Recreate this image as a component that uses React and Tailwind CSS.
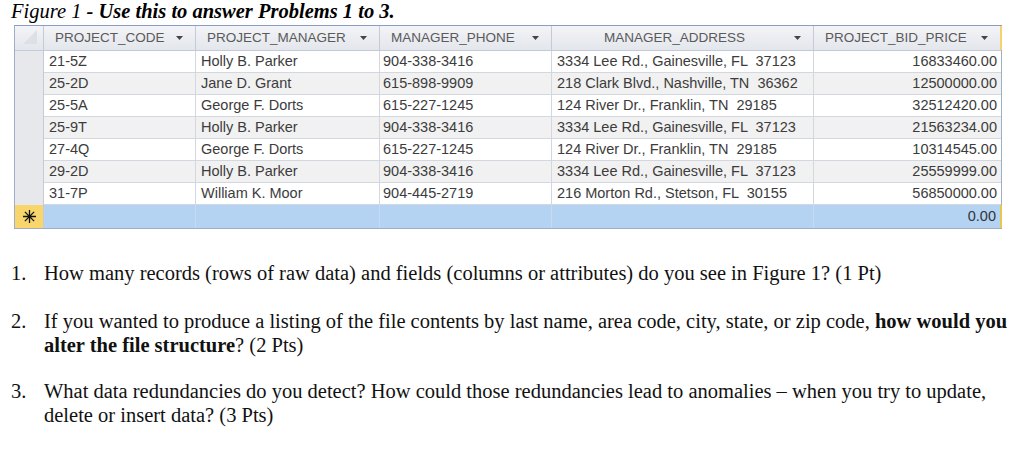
import React from "react";

const rows = [
  ["21-5Z", "Holly B. Parker", "904-338-3416", "3334 Lee Rd., Gainesville, FL  37123", "16833460.00"],
  ["25-2D", "Jane D. Grant", "615-898-9909", "218 Clark Blvd., Nashville, TN  36362", "12500000.00"],
  ["25-5A", "George F. Dorts", "615-227-1245", "124 River Dr., Franklin, TN  29185", "32512420.00"],
  ["25-9T", "Holly B. Parker", "904-338-3416", "3334 Lee Rd., Gainesville, FL  37123", "21563234.00"],
  ["27-4Q", "George F. Dorts", "615-227-1245", "124 River Dr., Franklin, TN  29185", "10314545.00"],
  ["29-2D", "Holly B. Parker", "904-338-3416", "3334 Lee Rd., Gainesville, FL  37123", "25559999.00"],
  ["31-7P", "William K. Moor", "904-445-2719", "216 Morton Rd., Stetson, FL  30155", "56850000.00"],
];

const cols = "grid grid-cols-[29px_152px_184px_172px_262px_188px]";

function Arrow() {
  return (
    <svg width="7" height="4" viewBox="0 0 7 4" className="shrink-0">
      <path d="M0 0h7L3.5 4z" fill="#444" />
    </svg>
  );
}

function Head({ label, center }) {
  return (
    <div className="flex items-center border-r border-[#c5cbd6] pl-[11px] pr-3 text-[#5a5a5a]">
      <span className={center ? "flex-1 text-center pr-2" : "flex-1"}>{label}</span>
      <Arrow />
    </div>
  );
}

export default function App() {
  return (
    <div className="w-[1036px] h-[465px] bg-white overflow-hidden font-['Liberation_Serif',serif] text-black">
      <div className="pl-[11px] text-[20.5px] leading-[23px] italic">
        Figure 1 <b>- Use this to answer Problems 1 to 3.</b>
      </div>

      <div className="ml-[14px] mt-[2px] w-[988px] border border-[#9fadc6] border-t-[#8b9dc3] font-['Liberation_Sans',sans-serif]">
        <div className={`${cols} h-[25px] text-[13.5px] bg-gradient-to-b from-[#f3f4f7] to-[#e3e6ec] border-b border-[#c5cbd6]`}>
          <div className="border-r border-[#c5cbd6] flex items-end">
            <svg width="20" height="18" viewBox="0 0 20 18" className="ml-1 mb-1">
              <path d="M18 2v14H4z" fill="#dde1e7" />
            </svg>
          </div>
          <Head label="PROJECT_CODE" />
          <Head label="PROJECT_MANAGER" />
          <Head label="MANAGER_PHONE" />
          <Head label="MANAGER_ADDRESS" center />
          <div className="flex items-center pl-[11px] pr-3 text-[#5a5a5a] border-r-2 border-r-[#f5d36a]">
            <span className="flex-1">PROJECT_BID_PRICE</span>
            <Arrow />
          </div>
        </div>

        {rows.map((r, i) => (
          <div key={r[0]} className={`${cols} h-[22px] text-[14.5px] border-b border-[#d3d8e0] text-[#3c3c3c] ${i % 2 ? "bg-[#f1f1f1]" : "bg-white"}`}>
            <div className="bg-[#e6e8ec] border-r border-[#c5cbd6]" />
            <div className="flex items-center px-[5px] border-r border-[#d3d8e0]">{r[0]}</div>
            <div className="flex items-center px-[5px] border-r border-[#d3d8e0]">{r[1]}</div>
            <div className="flex items-center px-[3px] border-r border-[#d3d8e0]">{r[2]}</div>
            <div className="flex items-center px-[5px] border-r border-[#d3d8e0] whitespace-pre">{r[3]}</div>
            <div className="flex items-center justify-end px-[5px]">{r[4]}</div>
          </div>
        ))}

        <div className={`${cols} h-[23px] text-[14.5px] bg-[#b4d3f3] text-[#333]`}>
          <div className="bg-[#f8d66b] border-r border-[#c5cbd6] flex items-center justify-center">
            <svg width="13" height="13" viewBox="0 0 13 13">
              <g stroke="#111" strokeWidth="1.3">
                <path d="M6.5 0v13M0 6.5h13M1.9 1.9l9.2 9.2M11.1 1.9l-9.2 9.2" />
              </g>
            </svg>
          </div>
          <div className="border-r border-[#c6dbf1]" />
          <div className="border-r border-[#c6dbf1]" />
          <div className="border-r border-[#c6dbf1]" />
          <div className="border-r border-[#c6dbf1]" />
          <div className="flex items-center justify-end px-[4px] border-r-2 border-[#e8c84a]">0.00</div>
        </div>
      </div>

      <ol className="mt-[32px] w-[1030px] text-[20.5px] leading-[24px] text-[#111]">
        <li className="flex">
          <span className="w-[44px] pl-[11px] shrink-0">1.</span>
          <span>How many records (rows of raw data) and fields (columns or attributes) do you see in Figure 1? (1 Pt)</span>
        </li>
        <li className="flex mt-[24px]">
          <span className="w-[44px] pl-[11px] shrink-0">2.</span>
          <span>
            If you wanted to produce a listing of the file contents by last name, area code, city, state, or zip code, <b>how would you alter the file structure</b>? (2 Pts)
          </span>
        </li>
        <li className="flex mt-[22px]">
          <span className="w-[44px] pl-[11px] shrink-0">3.</span>
          <span className="pr-[30px]">
            What data redundancies do you detect? How could those redundancies lead to anomalies – when you try to update, delete or insert data? (3 Pts)
          </span>
        </li>
      </ol>
    </div>
  );
}
